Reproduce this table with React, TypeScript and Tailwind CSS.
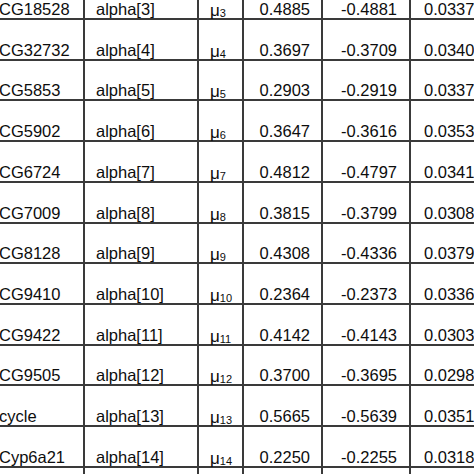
import React from 'react';

type Row = [string, string, string, string, string, string];

const rows: Row[] = [
    ['CG18528', 'alpha[3]', '3', '0.4885', '-0.4881', '0.0337'],
    ['CG32732', 'alpha[4]', '4', '0.3697', '-0.3709', '0.0340'],
    ['CG5853', 'alpha[5]', '5', '0.2903', '-0.2919', '0.0337'],
    ['CG5902', 'alpha[6]', '6', '0.3647', '-0.3616', '0.0353'],
    ['CG6724', 'alpha[7]', '7', '0.4812', '-0.4797', '0.0341'],
    ['CG7009', 'alpha[8]', '8', '0.3815', '-0.3799', '0.0308'],
    ['CG8128', 'alpha[9]', '9', '0.4308', '-0.4336', '0.0379'],
    ['CG9410', 'alpha[10]', '10', '0.2364', '-0.2373', '0.0336'],
    ['CG9422', 'alpha[11]', '11', '0.4142', '-0.4143', '0.0303'],
    ['CG9505', 'alpha[12]', '12', '0.3700', '-0.3695', '0.0298'],
    ['cycle', 'alpha[13]', '13', '0.5665', '-0.5639', '0.0351'],
    ['Cyp6a21', 'alpha[14]', '14', '0.2250', '-0.2255', '0.0318'],
];

// row heights so the grid lines land on the same pixels as the scan
const heights = [
    'h-[41px]', 'h-[41px]', 'h-[40px]', 'h-[41px]', 'h-[41px]', 'h-[41px]',
    'h-[40px]', 'h-[41px]', 'h-[41px]', 'h-[40px]', 'h-[41px]', 'h-[41px]',
];

const cell = 'flex items-end border-r-2 border-[#3a3a3a] shrink-0';

const App: React.FC = () => {
    return (
        <div
            className="w-[474px] h-[474px] overflow-hidden bg-white text-[#0d0d0d] text-[16.5px] leading-[18px]"
            style={{ fontFamily: '"Liberation Sans", Arial, sans-serif' }}
        >
            <div className="-ml-[12px] -mt-[21px] w-[520px]">
                {rows.map((r, i) => (
                    <div key={r[0]} className={`flex border-b-2 border-[#3a3a3a] ${heights[i]}`}>
                        <div className={`${cell} w-[97px] pl-[11px]`}>{r[0]}</div>
                        <div className={`${cell} w-[114px] pl-[11px]`}>{r[1]}</div>
                        <div className={`${cell} w-[45px] pl-[11px]`}>
                            <span className="text-[17px] translate-y-[2px]">μ</span>
                            <span className="text-[11px] leading-[12px] translate-y-[1px]">{r[2]}</span>
                        </div>
                        <div className={`${cell} w-[79px] justify-end pr-[11px]`}>{r[3]}</div>
                        <div className={`${cell} w-[88px] justify-end pr-[12px]`}>{r[4]}</div>
                        <div className={`${cell} w-[90px] pl-[13px]`}>{r[5]}</div>
                    </div>
                ))}
                <div className="flex h-[20px]">
                    <div className={`${cell} w-[97px]`} />
                    <div className={`${cell} w-[114px]`} />
                    <div className={`${cell} w-[45px]`} />
                    <div className={`${cell} w-[79px]`} />
                    <div className={`${cell} w-[88px]`} />
                    <div className={`${cell} w-[90px]`} />
                </div>
            </div>
        </div>
    );
};

export default App;
